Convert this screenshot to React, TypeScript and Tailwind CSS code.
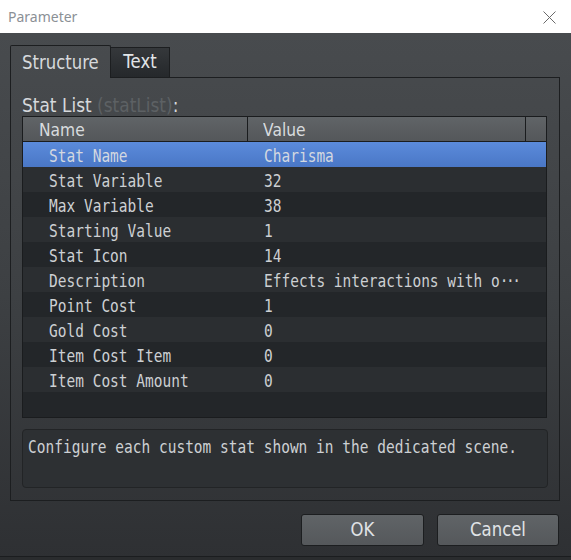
import React from "react";

const rows: [string, React.ReactNode][] = [
  ["Stat Name", "Charisma"],
  ["Stat Variable", "32"],
  ["Max Variable", "38"],
  ["Starting Value", "1"],
  ["Stat Icon", "14"],
  [
    "Description",
    <>
      Effects interactions with o<span className="tracking-[-2.5px]">{"\u00B7\u00B7\u00B7"}</span>
    </>,
  ],
  ["Point Cost", "1"],
  ["Gold Cost", "0"],
  ["Item Cost Item", "0"],
  ["Item Cost Amount", "0"],
];

const mono = "font-['DejaVu_Sans_Mono',monospace] text-[14.5px]";
const sans = "font-['DejaVu_Sans',sans-serif]";

function T({ children }: { children: React.ReactNode }) {
  return <span className="inline-block whitespace-nowrap scale-y-[1.16]">{children}</span>;
}

export default function App() {
  return (
    <div className="w-[571px] h-[560px] flex flex-col overflow-hidden">
      {/* title bar */}
      <div className="h-[33px] bg-white flex items-center justify-between pl-[8px] pr-[15px]">
        <span className="font-['Noto_Sans',sans-serif] text-[14px] text-[#8b9096]">Parameter</span>
        <svg width="13" height="13" viewBox="0 0 13 13" className="mt-[1px]">
          <path d="M0.5 0.5 L12.5 12.5 M12.5 0.5 L0.5 12.5" stroke="#6a6a6a" strokeWidth="1" fill="none" />
        </svg>
      </div>

      {/* body */}
      <div className="flex-1 flex flex-col bg-linear-to-b from-[#484b4e] via-[#3d4043] to-[#2e3033]">
        <div className="pl-[10px] pt-[12px]">
          {/* tab bar */}
          <div className="w-[550px] h-[33px] flex items-stretch">
            <div className={`w-[101px] border-l border-t border-r border-[#1c1e20] rounded-t-[2px] flex items-center pl-[11px] pt-[2px] text-[16.5px] text-[#d6d9dc] ${sans}`}>
              <T>Structure</T>
            </div>
            <div className={`w-[59px] mt-[2px] border-t border-r border-b border-[#1c1e20] bg-linear-to-b from-[#35383b] to-[#25282b] flex items-center justify-center text-[16.5px] text-[#e2e5e8] ${sans}`}>
              <T>Text</T>
            </div>
            <div className="flex-1 border-b border-[#1c1e20]" />
          </div>

          {/* panel */}
          <div className="w-[550px] h-[423px] border-l border-r border-b border-[#1c1e20] pl-[11px] pt-[14px]">
            <div className={`h-[22px] leading-[22px] pt-[2px] text-[17px] ${sans} text-[#d6d9dc]`}>
              <T>
                Stat List <span className="text-[#5d6164]">(statList)</span>:
              </T>
            </div>

            {/* table */}
            <div className="mt-[2px] w-[525px] h-[302px] border border-[#1a1c1e] flex flex-col bg-[#232629]">
              <div className={`h-[25px] flex border-b border-[#1a1c1e] bg-linear-to-b from-[#606467] to-[#54575a] text-[15.5px] text-[#d8dbde] ${sans}`}>
                <div className="w-[225px] border-r border-[#1a1c1e] flex items-center pl-[16px] pt-[4px]"><T>Name</T></div>
                <div className="w-[278px] border-r border-[#1a1c1e] flex items-center pl-[15px] pt-[4px]"><T>Value</T></div>
                <div className="flex-1" />
              </div>
              {rows.map(([n, v], i) => {
                const bg =
                  i === 0
                    ? "bg-linear-to-b from-[#5b8bdb] to-[#4a77c6] text-[#d3d8e0]"
                    : i % 2 === 1
                    ? "bg-[#2b2e31] text-[#cdd0d3]"
                    : "bg-[#232629] text-[#cdd0d3]";
                return (
                  <div key={n} className={`h-[25px] flex items-center pt-[5px] ${bg} ${mono}`}>
                    <div className="w-[226px] pl-[26px]"><T>{n}</T></div>
                    <div className="pl-[15px]"><T>{v}</T></div>
                  </div>
                );
              })}
            </div>

            {/* description */}
            <div className={`mt-[11px] w-[526px] h-[59px] rounded-[4px] border border-[#222426] bg-[#2d3033] pl-[5px] pt-[7px] text-[#cdd0d3] ${mono}`}>
              <T>Configure each custom stat shown in the dedicated scene.</T>
            </div>
          </div>
        </div>

        {/* buttons */}
        <div className={`mt-[13px] flex justify-end gap-[13px] pr-[12px] ${sans}`}>
          <button className="w-[123px] h-[32px] rounded-[3px] border border-[#1c1e20] bg-linear-to-b from-[#606467] to-[#55585b] text-[16.5px] text-[#e0e3e6] pt-[1px]">
            <T>OK</T>
          </button>
          <button className="w-[122px] h-[32px] rounded-[3px] border border-[#1c1e20] bg-linear-to-b from-[#606467] to-[#55585b] text-[16.5px] text-[#e0e3e6] pt-[1px]">
            <T>Cancel</T>
          </button>
        </div>
        <div className="flex-1" />
        <div className="h-[4px] border-t border-[#1b1d1f] bg-[#2a2c2e]" />
      </div>
    </div>
  );
}
